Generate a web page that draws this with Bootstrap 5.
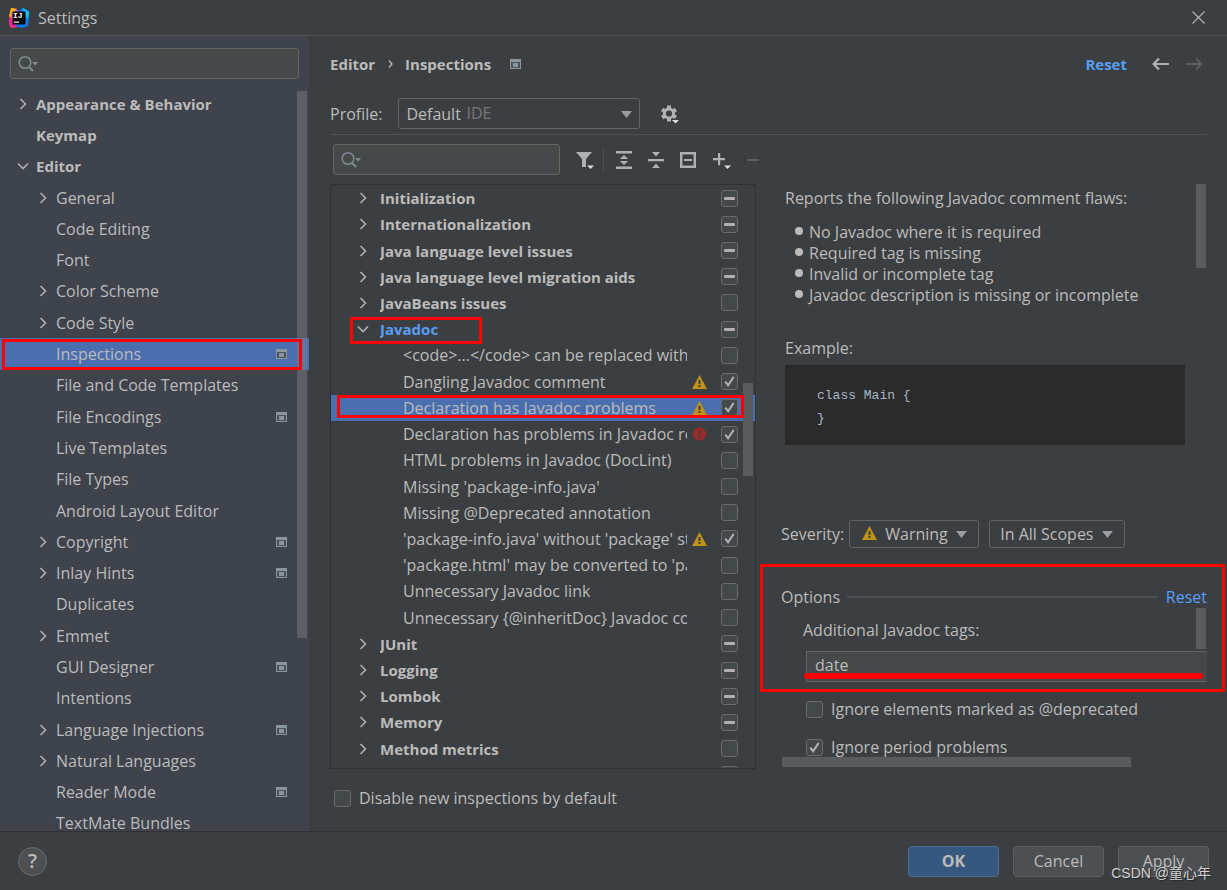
<!DOCTYPE html>
<html lang="en">
<head>
<meta charset="utf-8">
<meta name="viewport" content="width=device-width, initial-scale=1">
<title>Settings</title>
<link href="https://cdn.jsdelivr.net/npm/bootstrap@5.3.0/dist/css/bootstrap.min.css" rel="stylesheet">
<style>
  body { background:#3c3f41; color:#bbb; font:16px/20px "Open Sans","Noto Sans","Noto Sans CJK SC",sans-serif; }
  a { color:#589df6; text-decoration:none; }
  svg { display:block; flex:none; }
  .strong { font-size:15px; font-weight:700; }
  .titlebar { height:36px; border-bottom:1px solid #515456; padding:0 22px 0 8px; }
  .iconbtn { background:none; border:0; padding:0; color:#afb1b3; }
  .sidebar { width:309px; background:#3e434c; }
  .searchbox { border:1px solid #646464; border-radius:3px; background:#45494a; color:#7f8b91; height:31px; padding:0 7px; }
  .searchbox input { background:none; border:0; outline:0; color:#bbb; min-width:0; }
  .navsearch { margin:12px 10px 9px; }
  .tree { list-style:none; margin:0; padding:0; }
  .navtree { margin-bottom:-8px; }
  .navtree li { flex:1 0 31px; padding:0 22px 0 17px; }
  .navtree .twist { width:19px; }
  .navtree .sub { padding-left:37px; }
  .picked { background:#4b6eaf; }
  .thumb { position:absolute; width:10px; background:#595b5d; }
  .navthumb { top:55px; right:2px; height:547px; background:rgba(130,130,130,.45); }
  .box { position:absolute; border:3px solid #f00; pointer-events:none; z-index:2; }
  .navbox { inset:1px 7px 0 2px; }
  .docbox { left:19px; width:132px; top:1px; height:27px; }
  .declbox { inset:0 11px 3px 6px; }
  .optbox { left:-21px; right:-18px; top:-23px; height:128px; }
  .main { padding:0 20px 23px 21px; }
  .crumbs { height:55px; gap:11px; }
  .back { margin-left:14px; }
  .forward { margin:0 4px 0 6px; }
  .profile { height:44px; border-bottom:1px solid #515151; padding-top:2px; }
  .combo { appearance:none; background:#3c3f41; color:#bbb; border:1px solid #646464; border-radius:3px; }
  .combo-caret { position:absolute; right:8px; top:50%; margin-top:-3px; pointer-events:none; }
  .profile .combo { width:242px; height:31px; padding:0 7px; }
  .combo-note { position:absolute; left:68px; top:5px; color:#777; pointer-events:none; }
  .tools { height:49px; padding-left:3px; }
  .tools .searchbox { width:227px; }
  .toolset { gap:16px; }
  .divider { width:1px; height:24px; background:#515151; margin:0 12px 0 8px; }
  .listcol { flex:0 0 426px; }
  .checklist { border:1px solid #2f3133; overflow:hidden; }
  .inslist { margin-bottom:-20px; }
  .inslist li { flex:1 0 26px; padding:0 17px 0 26px; }
  .inslist .twist { width:23px; }
  .inslist .name { overflow:hidden; white-space:nowrap; flex:1; margin-right:5px; line-height:24px; }
  .inslist .leaf { padding-left:72px; }
  .opened { color:#589df6; }
  .mark-slot { width:16px; margin-right:13px; }
  .listthumb { right:2px; top:198px; height:93px; }
  .tick { appearance:none; flex:none; width:17px; height:17px; margin:0; border:1px solid #6b6b6b; border-radius:3px; background:#43494a center/15px no-repeat; }
  .tick:checked { background-image:url("data:image/svg+xml,%3Csvg xmlns='http://www.w3.org/2000/svg' viewBox='0 0 16 16'%3E%3Cpath d='M3.5 8.2l3 3.8 6-9' fill='none' stroke='%23b0b0b0' stroke-width='2.2'/%3E%3C/svg%3E"); }
  .tick.mixed { background-image:url("data:image/svg+xml,%3Csvg xmlns='http://www.w3.org/2000/svg' viewBox='0 0 15 15'%3E%3Crect x='2' y='6' width='11' height='3' rx='1' fill='%23b0b0b0'/%3E%3C/svg%3E"); }
  .details { margin-left:25px; min-width:0; }
  .about { padding:4px 22px 0 4px; height:336px; }
  .about ul { margin:14px 0 32px; padding:0; list-style:none; line-height:21px; }
  .about li { padding-left:24px; position:relative; }
  .about li::before { content:""; position:absolute; left:10px; top:5px; width:8px; height:8px; border-radius:50%; background:#bbb; }
  .sample { background:#2b2b2b; height:80px; margin:7px 0 0; padding:19px 32px; color:#a9b7c6; font:13px/23px "Liberation Mono",monospace; }
  .aboutthumb { right:1px; top:0; height:84px; }
  .severity { gap:5px; }
  .severity .combo { height:28px; padding:0 10px; }
  .sev { width:130px; margin-right:5px; } .scope { width:136px; }
  .severity .sev .combo { padding-left:35px; }
  .sev svg.warn { position:absolute; left:13px; top:6px; }
  .options { margin-top:39px; }
  .rule { height:2px; background:#515151; margin:0 9px 0 7px; }
  .optbody { padding:13px 0 0 22px; }
  .tagfield { display:block; margin:11px 0 17px 3px; width:calc(100% - 3px); height:31px; background:#45494a; border:1px solid #646464; border-right:0; color:#bbb; padding:0 8px 3px; }
  .opt { margin:0 0 18px 3px; }
  .opt:last-child { margin-bottom:0; }
  .underline { position:absolute; left:23px; right:4px; top:86px; height:6px; border-radius:3px; background:#f00; z-index:2; }
  .optthumb { right:1px; top:21px; height:41px; }
  .hthumb { width:349px; height:10px; background:#595b5d; position:absolute; left:1px; bottom:2px; }
  .newins { margin-top:19px; }
  .footbar { height:59px; border-top:1px solid #2f3133; padding:0 18px; }
  .pushes { gap:14px; }
  .push { height:31px; width:91px; border:1px solid #5e6060; border-radius:4px; background:#4c5052; color:#bbb; padding:0; }
  .push.ok { background:#365880; border-color:#4c708c; font-weight:700; }
  .help { width:29px; height:29px; border-radius:50%; border:1px solid #6b6d6e; background:#4c5052; color:#bbb; padding:0; font-weight:600; font-size:20px; line-height:20px; }
  .stamp { position:absolute; right:16px; bottom:7px; font:14px/20px "Liberation Sans","Noto Sans CJK SC",sans-serif; color:#d2d2d2; text-shadow:1px 1px 1px #222; white-space:nowrap; }
</style>
</head>
<body>
<svg width="0" height="0" class="position-absolute" aria-hidden="true">
  <symbol id="right" viewBox="0 0 12 12"><path d="M3.500 1l5 5-5 5" fill="none" stroke="#afb1b3" stroke-width="1.600"/></symbol>
  <symbol id="down" viewBox="0 0 12 12"><path d="M1 3.500l5 5 5-5" fill="none" stroke="#afb1b3" stroke-width="1.600"/></symbol>
  <symbol id="panel" viewBox="0 0 11 10"><path d="M0 0h11v10H0z" fill="#8a959c"/><path d="M1 3h9v6H1z" fill="#4b525b"/><path d="M3 4h5v4H3z" fill="#8a959c"/></symbol>
  <symbol id="search" viewBox="0 0 22 18"><circle cx="7" cy="7.500" r="5.800" fill="none" stroke="currentColor" stroke-width="1.500"/><path d="M11 12l4 4" stroke="currentColor" stroke-width="2"/><path d="M14 7h6l-3 3.500z" fill="currentColor"/></symbol>
  <symbol id="caret" viewBox="0 0 11 7"><path d="M0 0h11L5.500 7z" fill="#9a9da0"/></symbol>
  <symbol id="warn" viewBox="0 0 15 14"><path d="M7.500 0L15 14H0z" fill="#be9117"/><path d="M6.500 5h2v4h-2zM6.500 10h2v2h-2z" fill="#3c3f41"/></symbol>
  <symbol id="err" viewBox="0 0 14 14"><circle cx="7" cy="7" r="6.500" fill="#9e2927"/><path d="M6 3h2v5H6zM6 9h2v2H6z" fill="#3c3f41"/></symbol>
</svg>
<div class="min-vh-100 d-flex flex-column position-relative overflow-hidden">
  <header class="titlebar d-flex align-items-center">
    <svg width="22" height="22" viewBox="0 0 22 22" aria-hidden="true">
      <path d="M3 1l6 1 2 5-2 13-6 1-2-4 1-4-1-4 2-3z" fill="#f9512e"/><path d="M3 1l6 1-6 8-2-1z" fill="#fdb60d"/><path d="M1 13l3-4 5 11-6 1-2-4z" fill="#e8299a"/>
      <path d="M10 4l5-3 6 3v5l-1 10-7 2-5-2z" fill="#087cfa"/><path d="M15 1l6 4-1 7-4-5z" fill="#16c5f3"/><path d="M8 2l3 2v4H6z" fill="#b74af7"/><path d="M3 6h3v5H3z" fill="#ff6b8f"/>
      <path d="M4.500 4.500h13v13h-13z" fill="#080808"/><text x="5" y="11" font-family="Liberation Mono" font-weight="700" font-size="8" fill="#fff">IJ</text><path d="M6 14.500h5v1.200H6z" fill="#fff"/>
    </svg>
    <span class="ms-2">Settings</span>
    <button class="iconbtn ms-auto" aria-label="Close"><svg width="13" height="13" viewBox="0 0 13 13"><path d="M.5.5l12 12M12.500.5l-12 12" stroke="currentColor" stroke-width="1.200"/></svg></button>
  </header>

  <div class="d-flex flex-grow-1">
    <nav class="sidebar d-flex flex-column flex-shrink-0 position-relative overflow-hidden" aria-label="Settings sections">
      <label class="searchbox navsearch d-flex align-items-center"><svg width="22" height="18"><use href="#search"/></svg><input class="flex-grow-1" type="text" aria-label="Search settings"></label>
      <ul class="tree navtree d-flex flex-column flex-grow-1" id="nav"></ul>
      <div class="thumb navthumb"></div>
    </nav>

    <main class="main flex-grow-1 d-flex flex-column">
      <div class="crumbs d-flex align-items-center">
        <span class="strong">Editor</span>
        <svg width="8" height="10" viewBox="0 0 8 10"><path d="M3 1.500l3 3.500-3 3.500" fill="none" stroke="#bbb" stroke-width="1.300"/></svg>
        <span class="strong">Inspections</span>
        <svg class="ms-2" width="11" height="10"><use href="#panel"/></svg>
        <a href="#" class="strong ms-auto">Reset</a>
        <button class="iconbtn back" aria-label="Back"><svg width="17" height="14" viewBox="0 0 17 14"><path d="M7 1.500L1.500 7 7 12.500M2 7h15" fill="none" stroke="currentColor" stroke-width="2.200"/></svg></button>
        <button class="iconbtn forward" aria-label="Forward" disabled><svg width="17" height="14" viewBox="0 0 17 14"><path d="M10 1.500L15.500 7 10 12.500M15 7H0" fill="none" stroke="#5c5e60" stroke-width="2"/></svg></button>
      </div>
      <div class="profile d-flex align-items-center">
        <label for="profile" class="me-3">Profile:</label>
        <div class="position-relative me-3"><select id="profile" class="combo"><option>Default</option></select><span class="combo-note">IDE</span><svg class="combo-caret" width="11" height="7"><use href="#caret"/></svg></div>
        <button class="iconbtn ms-1" aria-label="Profile actions"><svg width="20" height="20" viewBox="0 0 20 20"><circle cx="9" cy="9.500" r="4.600" fill="none" stroke="currentColor" stroke-width="3"/><path id="cog" d="M7 1.500h4v3H7zM7 14.500h4v3H7z" fill="currentColor"/><use href="#cog" transform="rotate(60 9 9.500)"/><use href="#cog" transform="rotate(120 9 9.500)"/><path d="M11 14.500h9V20h-7z" fill="#3c3f41"/><path d="M12 16h7l-3.500 3.500z" fill="#ddd"/></svg></button>
      </div>
      <div class="tools d-flex align-items-center">
        <label class="searchbox d-flex align-items-center me-3"><svg width="22" height="18"><use href="#search"/></svg><input class="flex-grow-1" type="text" aria-label="Search inspections"></label>
        <button class="iconbtn" aria-label="Filter"><svg width="19" height="18" viewBox="0 0 19 18"><path d="M0 1h16l-6 7v8H6V8z" fill="currentColor"/><path d="M11 13h8v5h-8z" fill="#3c3f41"/><path d="M11 14.500h7L14.500 18z" fill="#ddd"/></svg></button>
        <span class="divider"></span>
        <div class="toolset d-flex align-items-center">
          <button class="iconbtn" aria-label="Expand all"><svg width="16" height="18" viewBox="0 0 16 18"><path d="M0 0h16v2.400H0zM0 15.600h16V18H0zM4 8l4-4 4 4zM4 10l4 4 4-4z" fill="currentColor"/></svg></button>
          <button class="iconbtn" aria-label="Collapse all"><svg width="16" height="18" viewBox="0 0 16 18"><path d="M0 8h16v2.200H0zM4 1h8L8 5.500zM4 17h8l-4-4.500z" fill="currentColor"/></svg></button>
          <button class="iconbtn" aria-label="Reset to empty"><svg width="16" height="16" viewBox="0 0 16 16"><path d="M1.200 1.200h13.600v13.600H1.200z" fill="none" stroke="currentColor" stroke-width="2.400"/><path d="M4 7h8v2H4z" fill="currentColor"/></svg></button>
          <button class="iconbtn" aria-label="Add"><svg width="19" height="19" viewBox="0 0 19 19"><path d="M6 3h2.200v5H13v2.200H8.200v5H6v-5H1V8h5z" fill="currentColor"/><path d="M12 15.500h7L15.500 19z" fill="#ddd"/></svg></button>
          <button class="iconbtn" aria-label="Remove" disabled><svg width="12" height="2" viewBox="0 0 12 2"><path d="M0 0h12v2H0z" fill="#5c5e60"/></svg></button>
        </div>
      </div>

      <div class="d-flex flex-grow-1">
        <div class="listcol checklist d-flex flex-column position-relative">
          <ul class="tree inslist d-flex flex-column flex-grow-1" id="inspections"></ul>
          <div class="thumb listthumb"></div>
        </div>

        <section class="details flex-grow-1 position-relative">
          <div class="about position-relative">
            <div>Reports the following Javadoc comment flaws:</div>
            <ul><li>No Javadoc where it is required</li><li>Required tag is missing</li><li>Invalid or incomplete tag</li><li>Javadoc description is missing or incomplete</li></ul>
            <div>Example:</div>
            <pre class="sample">class Main {
}</pre>
            <div class="thumb aboutthumb"></div>
          </div>
          <div class="severity d-flex align-items-center">
            <label for="sev">Severity:</label>
            <div class="sev position-relative"><select id="sev" class="combo w-100"><option>Warning</option></select><svg class="warn" width="15" height="14"><use href="#warn"/></svg><svg class="combo-caret me-1" width="11" height="7"><use href="#caret"/></svg></div>
            <div class="scope position-relative"><select class="combo w-100" aria-label="Scope"><option>In All Scopes</option></select><svg class="combo-caret me-1" width="11" height="7"><use href="#caret"/></svg></div>
          </div>
          <div class="options position-relative">
            <div class="d-flex align-items-center"><span>Options</span><span class="rule flex-grow-1"></span><a href="#">Reset</a></div>
            <div class="optbody">
              <label for="tags" class="d-block">Additional Javadoc tags:</label>
              <input id="tags" class="tagfield" type="text" value="date">
              <label class="opt d-flex align-items-center gap-2"><input type="checkbox" class="tick">Ignore elements marked as @deprecated</label>
              <label class="opt d-flex align-items-center gap-2"><input type="checkbox" class="tick" checked>Ignore period problems</label>
            </div>
            <div class="thumb optthumb"></div>
            <div class="underline"></div>
            <div class="box optbox"></div>
          </div>
          <div class="hthumb"></div>
        </section>
      </div>
      <label class="newins d-flex align-items-center gap-2 ms-1"><input type="checkbox" class="tick">Disable new inspections by default</label>
    </main>
  </div>

  <footer class="footbar d-flex align-items-center">
    <button class="help me-auto" aria-label="Help">?</button>
    <div class="pushes d-flex"><button class="push ok">OK</button><button class="push">Cancel</button><button class="push">Apply</button></div>
  </footer>
  <div class="stamp">CSDN @童心年</div>
</div>
<script src="https://cdn.jsdelivr.net/npm/bootstrap@5.3.0/dist/js/bootstrap.bundle.min.js"></script>
<script>
  const icon = (id, w, h, cls = '') => `<svg class="${cls}" width="${w}" height="${h}"><use href="#${id}"/></svg>`;
  const twist = t => `<span class="twist">${t ? icon(t, 12, 12) : ''}</span>`;

  // [label, twist, nested, project-level marker]
  const nav = [
    ['Appearance &amp; Behavior', 'right', 0], ['Keymap', '', 0], ['Editor', 'down', 0],
    ['General', 'right', 1], ['Code Editing', '', 1], ['Font', '', 1], ['Color Scheme', 'right', 1],
    ['Code Style', 'right', 1], ['Inspections', '', 1, 1], ['File and Code Templates', '', 1],
    ['File Encodings', '', 1, 1], ['Live Templates', '', 1], ['File Types', '', 1],
    ['Android Layout Editor', '', 1], ['Copyright', 'right', 1, 1], ['Inlay Hints', 'right', 1, 1],
    ['Duplicates', '', 1], ['Emmet', 'right', 1], ['GUI Designer', '', 1, 1], ['Intentions', '', 1],
    ['Language Injections', 'right', 1, 1], ['Natural Languages', 'right', 1],
    ['Reader Mode', '', 1, 1], ['TextMate Bundles', '', 1]
  ];
  document.getElementById('nav').innerHTML = nav.map(([label, t, sub, mark]) => {
    const on = label === 'Inspections';
    return `<li class="d-flex align-items-center position-relative ${sub ? 'sub' : 'strong'} ${on ? 'picked' : ''}">${twist(t)}<span>${label}</span>${mark ? icon('panel', 11, 10, 'ms-auto') : ''}${on ? '<span class="box navbox"></span>' : ''}</li>`;
  }).join('');

  // [label, checkbox state, leaf, severity icon]
  const rows = [
    ['Initialization', 'mixed'], ['Internationalization', 'mixed'], ['Java language level issues', 'mixed'],
    ['Java language level migration aids', 'mixed'], ['JavaBeans issues', ''], ['Javadoc', 'mixed'],
    ['&lt;code&gt;...&lt;/code&gt; can be replaced with {@code ...}', '', 1], ['Dangling Javadoc comment', 'on', 1, 'warn'],
    ['Declaration has Javadoc problems', 'on', 1, 'warn'],
    ['Declaration has problems in Javadoc references', 'on', 1, 'err'],
    ['HTML problems in Javadoc (DocLint)', '', 1], ["Missing 'package-info.java'", '', 1],
    ['Missing @Deprecated annotation', '', 1], ["'package-info.java' without 'package' statement", 'on', 1, 'warn'],
    ["'package.html' may be converted to 'package-info.java'", '', 1], ['Unnecessary Javadoc link', '', 1],
    ['Unnecessary {@inheritDoc} Javadoc comment', '', 1], ['JUnit', 'mixed'], ['Logging', 'mixed'],
    ['Lombok', 'mixed'], ['Memory', 'mixed'], ['Method metrics', ''], ['Modularization issues', '']
  ];
  document.getElementById('inspections').innerHTML = rows.map(([label, state, leaf, sev], i) => {
    const open = label === 'Javadoc', on = label === 'Declaration has Javadoc problems';
    return `<li class="d-flex align-items-center position-relative ${leaf ? 'leaf' : 'strong'} ${on ? 'picked' : ''}">${leaf ? '' : twist(open ? 'down' : 'right')}<label class="name ${open ? 'opened' : ''}" for="i${i}">${label}</label><span class="mark-slot">${sev ? icon(sev, 15, 14) : ''}</span><input id="i${i}" type="checkbox" class="tick ${state === 'mixed' ? 'mixed' : ''}" ${state === 'on' ? 'checked' : ''}>${open ? '<span class="box docbox"></span>' : ''}${on ? '<span class="box declbox"></span>' : ''}</li>`;
  }).join('');
</script>
</body>
</html>
